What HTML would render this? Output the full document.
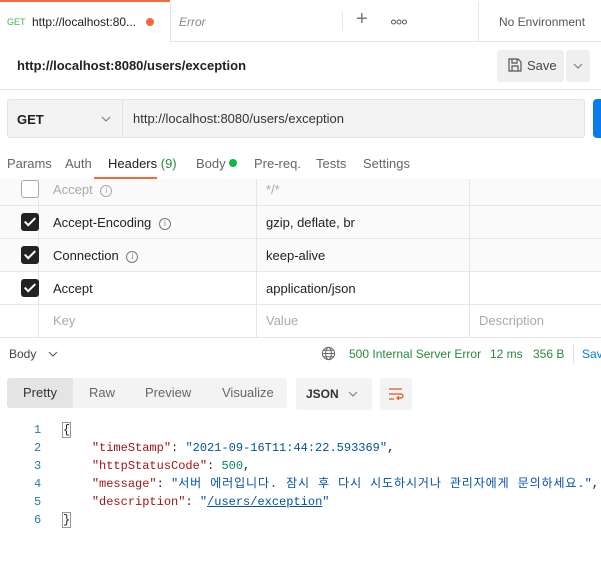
<!DOCTYPE html>
<html><head><meta charset="utf-8"><style>
*{margin:0;padding:0;box-sizing:border-box}
body{width:601px;height:570px;overflow:hidden;background:#fff;font-family:"Liberation Sans",sans-serif;font-size:13px;color:#212121;position:relative}
.a{position:absolute;white-space:nowrap}
.mono{font-family:"Liberation Mono","Noto Sans CJK KR",monospace;font-size:12px}
.cb{position:absolute;left:21px;width:18px;height:18px;border-radius:3px;background:#222;}
.cb:after{content:"";position:absolute;left:6px;top:2px;width:4px;height:9px;border:solid #fff;border-width:0 2px 2px 0;transform:rotate(45deg)}
.row{position:absolute;left:0;width:601px;border-bottom:1px solid #e6e6e6}
.vl{position:absolute;width:1px;background:#e6e6e6;top:179px;height:158px}
.i{display:inline-block;width:12px;height:12px;border:1px solid #777;border-radius:50%;font-size:8px;line-height:10px;text-align:center;vertical-align:1px;margin-left:4px;color:#777}
</style></head><body>
<!-- tab bar -->
<div class="a" style="left:0;top:0;width:170px;height:2px;background:#f26b3a"></div>
<div class="a" style="left:0;top:41px;width:601px;height:1px;background:#e6e6e6"></div>
<div class="a" style="left:170px;top:2px;width:1px;height:40px;background:#e6e6e6"></div>
<div class="a" style="left:0;top:41px;width:170px;height:1px;background:#fff"></div>
<div class="a" style="left:7px;top:17px;font-size:9px;color:#4caf50">GET</div>
<div class="a" style="left:32px;top:15px;font-size:12px">http://localhost:80...</div>
<div class="a" style="left:146px;top:18px;width:8px;height:8px;border-radius:50%;background:#f26b3a"></div>
<div class="a" style="left:179px;top:15px;font-size:12px;font-style:italic;color:#888">Error</div>
<div class="a" style="left:342px;top:11px;width:1px;height:20px;background:#e6e6e6"></div>
<div class="a" style="left:356px;top:8px;font-size:20px;color:#777">+</div>
<svg class="a" style="left:391px;top:19px" width="16" height="6"><circle cx="2.5" cy="3" r="2" fill="none" stroke="#555"/><circle cx="8" cy="3" r="2" fill="none" stroke="#555"/><circle cx="13.5" cy="3" r="2" fill="none" stroke="#555"/></svg>
<div class="a" style="left:478px;top:2px;width:1px;height:40px;background:#e6e6e6"></div>
<div class="a" style="left:499px;top:15px;font-size:12px;color:#555">No Environment</div>
<!-- title -->
<div class="a" style="left:17px;top:58px;font-size:13px;font-weight:bold">http://localhost:8080/users/exception</div>
<div class="a" style="left:497px;top:50px;width:67px;height:32px;background:#efefef;border-radius:3px"></div>
<svg class="a" style="left:507px;top:57px" width="16" height="16" viewBox="0 0 16 16" fill="none" stroke="#555" stroke-width="1.2"><path d="M2 2h9l3 3v9H2z M5 2v4h5V2 M5 14v-5h6v5"/></svg>
<div class="a" style="left:527px;top:58px;font-size:13px;color:#444">Save</div>
<div class="a" style="left:566px;top:50px;width:24px;height:32px;background:#efefef;border-radius:3px"></div>
<svg class="a" style="left:573px;top:62px" width="10" height="8"><path d="M1 2l4 4 4-4" stroke="#777" fill="none"/></svg>
<div class="a" style="left:0;top:89px;width:601px;height:1px;background:#e6e6e6"></div>
<!-- url bar -->
<div class="a" style="left:7px;top:99px;width:578px;height:39px;background:#f3f3f3;border:1px solid #e3e3e3;border-radius:3px"></div>
<div class="a" style="left:122px;top:100px;width:1px;height:37px;background:#e3e3e3"></div>
<div class="a" style="left:17px;top:112px;font-weight:bold;font-size:13px">GET</div>
<svg class="a" style="left:101px;top:115px" width="10" height="8"><path d="M1 2l4 4 4-4" stroke="#777" fill="none"/></svg>
<div class="a" style="left:133px;top:111px;font-size:13px;color:#333">http://localhost:8080/users/exception</div>
<div class="a" style="left:593px;top:99px;width:20px;height:39px;background:#097bed;border-radius:4px"></div>
<!-- req tabs -->
<div class="a" style="left:7px;top:156px;color:#666">Params</div>
<div class="a" style="left:65px;top:156px;color:#666">Auth</div>
<div class="a" style="left:108px;top:156px;color:#212121">Headers <span style="color:#27893c">(9)</span></div>
<div class="a" style="left:94px;top:177px;width:63px;height:2px;background:#f26b3a"></div>
<div class="a" style="left:196px;top:156px;color:#666">Body</div>
<div class="a" style="left:229px;top:159px;width:8px;height:8px;border-radius:50%;background:#12b548"></div>
<div class="a" style="left:254px;top:156px;color:#666">Pre-req.</div>
<div class="a" style="left:316px;top:156px;color:#666">Tests</div>
<div class="a" style="left:363px;top:156px;color:#666">Settings</div>
<!-- table -->
<div class="row" style="top:179px;height:27px;background:#fafafa"></div>
<div class="row" style="top:206px;height:33px;background:#fafafa"></div>
<div class="row" style="top:239px;height:33px;background:#fafafa"></div>
<div class="row" style="top:272px;height:33px"></div>
<div class="row" style="top:305px;height:33px"></div>
<div class="vl" style="left:38px"></div><div class="vl" style="left:256px"></div><div class="vl" style="left:469px"></div>
<div class="a" style="left:21px;top:180px;width:18px;height:18px;border:1px solid #aaa;border-radius:3px;background:#fff"></div>
<div class="a" style="left:53px;top:182px;color:#aaa">Accept <span class="i" style="border-color:#aaa;color:#aaa">i</span></div>
<div class="a" style="left:266px;top:182px;color:#aaa">*/*</div>
<div class="cb" style="top:213px"></div>
<div class="a" style="left:53px;top:215px">Accept-Encoding <span class="i">i</span></div>
<div class="a" style="left:266px;top:215px">gzip, deflate, br</div>
<div class="cb" style="top:246px"></div>
<div class="a" style="left:53px;top:248px">Connection <span class="i">i</span></div>
<div class="a" style="left:266px;top:248px">keep-alive</div>
<div class="cb" style="top:279px"></div>
<div class="a" style="left:53px;top:281px">Accept</div>
<div class="a" style="left:266px;top:281px">application/json</div>
<div class="a" style="left:53px;top:313px;color:#aaa">Key</div>
<div class="a" style="left:266px;top:313px;color:#aaa">Value</div>
<div class="a" style="left:479px;top:313px;color:#aaa">Description</div>
<!-- response header -->
<div class="a" style="left:9px;top:347px;font-size:12px;color:#444">Body</div>
<svg class="a" style="left:48px;top:350px" width="10" height="8"><path d="M1 2l4 4 4-4" stroke="#555" fill="none"/></svg>
<svg class="a" style="left:321px;top:346px" width="15" height="15" viewBox="0 0 16 16" fill="none" stroke="#666" stroke-width="1.1"><circle cx="8" cy="8" r="6.5"/><ellipse cx="8" cy="8" rx="3" ry="6.5"/><path d="M1.5 8h13M2.5 4.5h11M2.5 11.5h11"/></svg>
<div class="a" style="left:349px;top:347px;font-size:12px;color:#27893c">500 Internal Server Error</div>
<div class="a" style="left:490px;top:347px;font-size:12px;color:#27893c">12 ms</div>
<div class="a" style="left:533px;top:347px;font-size:12px;color:#27893c">356 B</div>
<div class="a" style="left:573px;top:344px;width:1px;height:20px;background:#e0e0e0"></div>
<div class="a" style="left:582px;top:347px;font-size:12px;color:#097bed">Save</div>
<!-- response tabs -->
<div class="a" style="left:7px;top:378px;width:280px;height:30px;background:#f3f3f3;border-radius:3px"></div>
<div class="a" style="left:7px;top:378px;width:66px;height:30px;background:#e4e4e4;border-radius:3px 0 0 3px"></div>
<div class="a" style="left:23px;top:385px;color:#333">Pretty</div>
<div class="a" style="left:89px;top:385px;color:#666">Raw</div>
<div class="a" style="left:145px;top:385px;color:#666">Preview</div>
<div class="a" style="left:222px;top:385px;color:#666">Visualize</div>
<div class="a" style="left:296px;top:378px;width:76px;height:32px;background:#f3f3f3;border-radius:3px"></div>
<div class="a" style="left:306px;top:387px;font-size:12px;font-weight:bold;color:#333">JSON</div>
<svg class="a" style="left:348px;top:390px" width="10" height="8"><path d="M1 2l4 4 4-4" stroke="#777" fill="none"/></svg>
<div class="a" style="left:380px;top:378px;width:32px;height:32px;background:#f3f3f3;border-radius:3px"></div>
<svg class="a" style="left:388px;top:386px" width="16" height="16" viewBox="0 0 16 16" fill="none" stroke="#e0531f" stroke-width="1.2"><path d="M1 3h13M1 8h12a2 2 0 010 4H9M11 10l-2 2 2 2M1 13h5"/></svg>
<!-- code -->
<div class="a mono" style="left:0;top:421px;line-height:18px;width:601px">
<div style="position:absolute;left:34px;color:#2a7aa8">1<br>2<br>3<br>4<br>5<br>6</div>
<div style="position:absolute;left:63px">
<span style="outline:1px solid #999">{</span><br>
&nbsp;&nbsp;&nbsp;&nbsp;<span style="color:#a31515">"timeStamp"</span>: <span style="color:#0451a5">"2021-09-16T11:44:22.593369"</span>,<br>
&nbsp;&nbsp;&nbsp;&nbsp;<span style="color:#a31515">"httpStatusCode"</span>: <span style="color:#098658">500</span>,<br>
&nbsp;&nbsp;&nbsp;&nbsp;<span style="color:#a31515">"message"</span>: <span style="color:#0451a5">"<span style="letter-spacing:0.9px">서버 에러입니다. 잠시 후 다시 시도하시거나 관리자에게 문의하세요</span>."</span>,<br>
&nbsp;&nbsp;&nbsp;&nbsp;<span style="color:#a31515">"description"</span>: <span style="color:#0451a5">"<u>/users/exception</u>"</span><br>
<span style="outline:1px solid #999">}</span></div>
</div>
</body></html>
